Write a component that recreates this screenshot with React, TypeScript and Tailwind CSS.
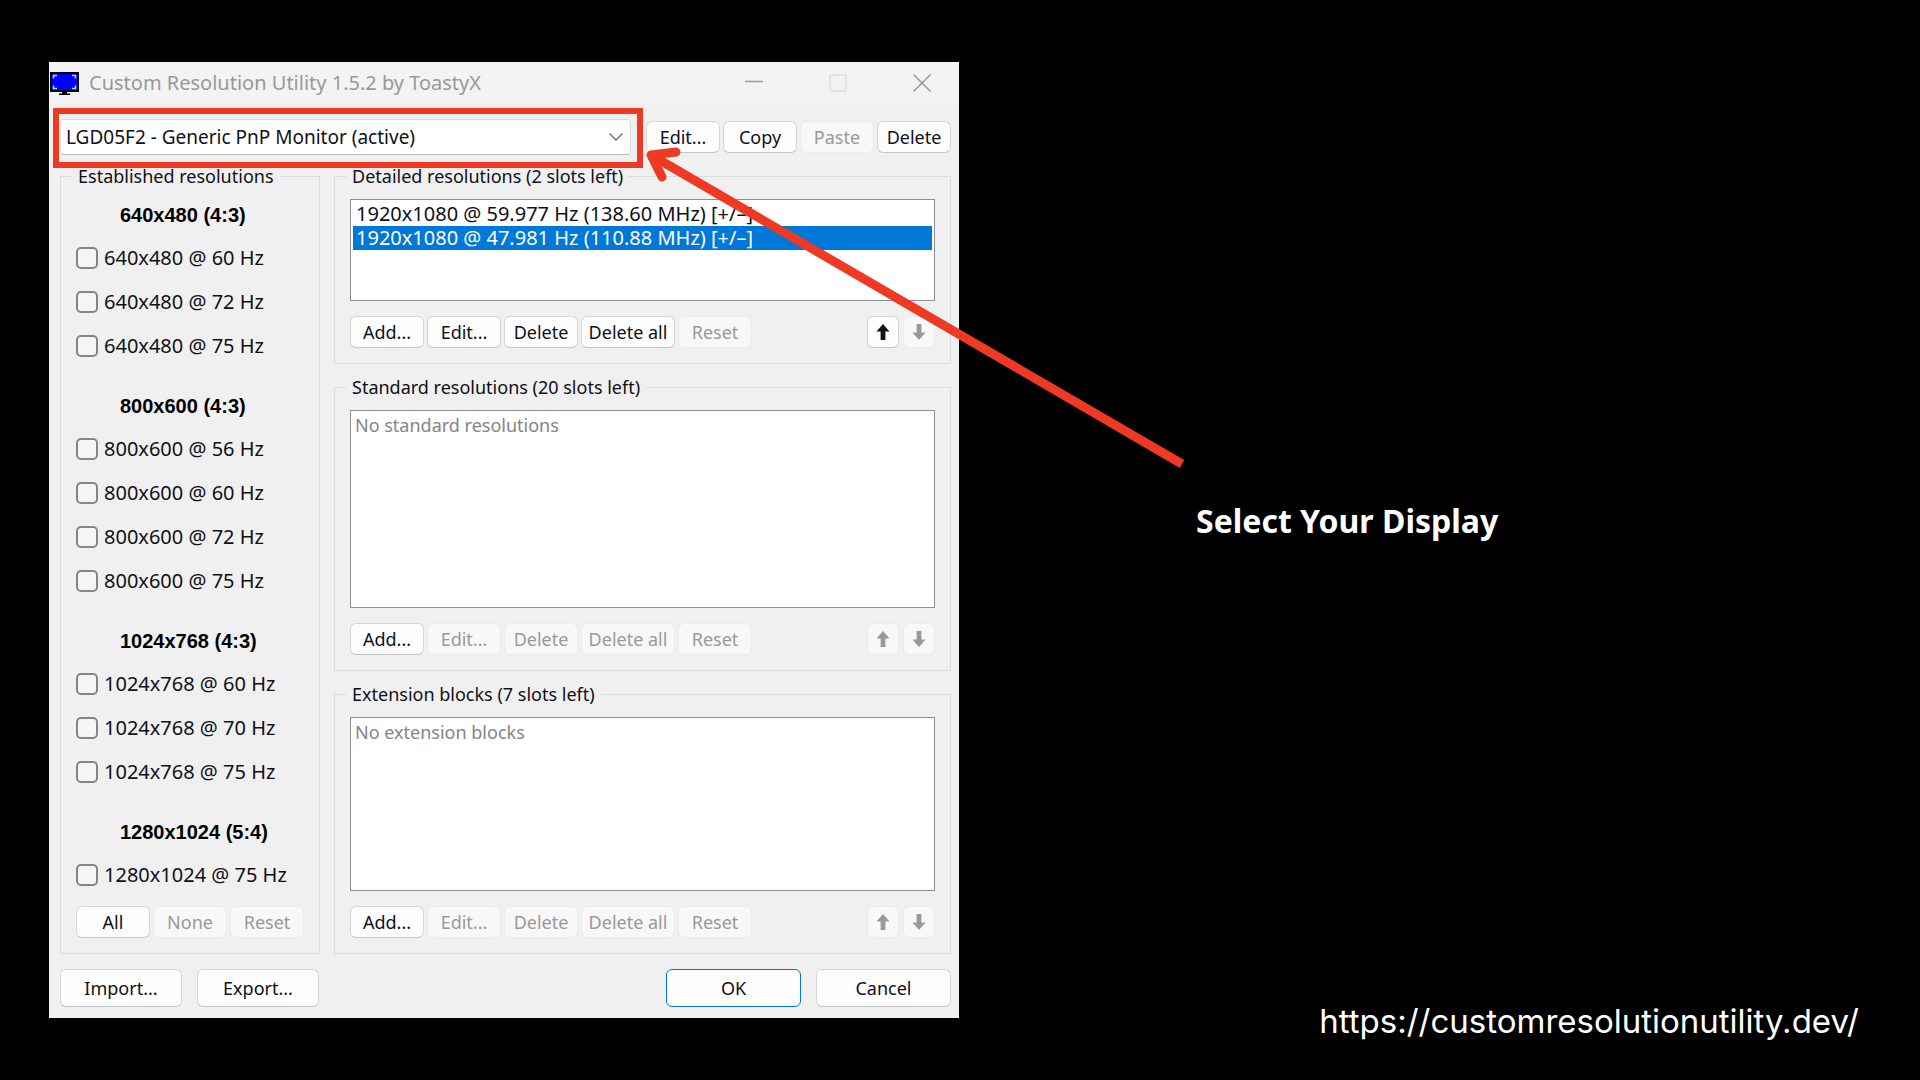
import React, { useState } from "react";

type Slot = { title: string; items: string[]; empty: string; height: string };

const modes = [
  { name: "640x480", ratio: "4:3", rates: [60, 72, 75] },
  { name: "800x600", ratio: "4:3", rates: [56, 60, 72, 75] },
  { name: "1024x768", ratio: "4:3", rates: [60, 70, 75] },
  { name: "1280x1024", ratio: "5:4", rates: [75] },
];

const slots: Slot[] = [
  {
    title: "Detailed resolutions (2 slots left)",
    items: ["1920x1080 @ 59.977 Hz (138.60 MHz) [+/–]", "1920x1080 @ 47.981 Hz (110.88 MHz) [+/–]"],
    empty: "",
    height: "min-h-[102px]",
  },
  { title: "Standard resolutions (20 slots left)", items: [], empty: "No standard resolutions", height: "min-h-[198px]" },
  { title: "Extension blocks (7 slots left)", items: [], empty: "No extension blocks", height: "min-h-[174px]" },
];

function Button({
  children,
  size = "w-[74px] h-8",
  primary = false,
  ...rest
}: React.ButtonHTMLAttributes<HTMLButtonElement> & { size?: string; primary?: boolean }) {
  const edge = primary ? "border-[#0078d4]" : "border-[#d6d6d6] border-b-[#c6c6c6]";
  return (
    <button
      type="button"
      className={`${size} ${edge} flex shrink-0 items-center justify-center whitespace-nowrap rounded-md border bg-[#fdfdfd] text-lg leading-6 text-[#101018] disabled:border-[#ebebeb] disabled:bg-[#f8f8f8] disabled:text-[#999999]`}
      {...rest}
    >
      {children}
    </button>
  );
}

function Arrow({ down = false }: { down?: boolean }) {
  return (
    <svg viewBox="0 0 14 16" className={down ? "h-4 w-3.5 rotate-180" : "h-4 w-3.5"} fill="currentColor" aria-hidden="true">
      <path d="M7 0 13.5 7.5H9.4V16H4.6V7.5H.5Z" />
    </svg>
  );
}

function Group({ title, children }: { title: string; children: React.ReactNode }) {
  return (
    <fieldset className="min-w-0 border border-[#dcdcdc] px-[15px] pb-[15px]">
      <legend className="-ml-1 px-1.5 text-lg leading-6">{title}</legend>
      {children}
    </fieldset>
  );
}

function SlotGroup({ slot }: { slot: Slot }) {
  const [selected, setSelected] = useState(1);
  const filled = slot.items.length > 0;
  return (
    <Group title={slot.title}>
      <ul
        role="listbox"
        aria-label={slot.title}
        className={`${slot.height} mt-[11px] border border-[#8b8e98] bg-white p-0.5 text-xl leading-6`}
      >
        {slot.items.map((item, i) => (
          <li
            key={item}
            role="option"
            aria-selected={i === selected}
            onClick={() => setSelected(i)}
            className={i === selected ? "bg-[#0078d7] px-[3px] text-white" : "px-[3px]"}
          >
            {item}
          </li>
        ))}
        {!filled && <li className="px-0.5 text-lg leading-6 text-[#858585]">{slot.empty}</li>}
      </ul>
      <div className="mt-[15px] flex gap-[3px]">
        <Button>Add...</Button>
        <Button disabled={!filled}>Edit...</Button>
        <Button disabled={!filled}>Delete</Button>
        <Button disabled={!filled} size="w-[94px] h-8">
          Delete all
        </Button>
        <Button disabled>Reset</Button>
        <div className="ml-auto flex gap-1">
          <Button disabled={!filled} size="size-8" aria-label="Move up">
            <Arrow />
          </Button>
          <Button disabled size="size-8" aria-label="Move down">
            <Arrow down />
          </Button>
        </div>
      </div>
    </Group>
  );
}

function TitleBar() {
  return (
    <header className="flex h-[42px] items-center bg-[#f3f3f3] pl-px pr-1 text-[#999999]">
      <svg viewBox="0 0 29 23" className="h-[23px] w-[29px]" aria-hidden="true">
        <path d="M0 0h29v20H0Z" fill="#000" />
        <path d="M2 2h25v16H2Z" fill="#0000ff" />
        <path d="M3.5 6.5V3.5H7M22 3.5h3.500v3M25.500 13.500v3H22M7 16.500H3.500v-3" fill="none" stroke="#a8e8ff" strokeWidth="1.500" />
        <path d="M12 20h5v1.500h3V23H9v-1.500h3Z" fill="#000" />
      </svg>
      <h1 className="ml-2.5 text-xl leading-6">Custom Resolution Utility 1.5.2 by ToastyX</h1>
      <div className="ml-auto flex gap-[18px]">
        <button type="button" aria-label="Minimize" className="flex h-8 w-[66px] items-center justify-center">
          <svg viewBox="0 0 18 18" className="size-[18px]" stroke="currentColor" strokeWidth="1.500" aria-hidden="true">
            <path d="M0 7.500h18" />
          </svg>
        </button>
        <button type="button" disabled aria-label="Maximize" className="flex h-8 w-[66px] items-center justify-center text-[#e0e0e0]">
          <svg viewBox="0 0 18 18" className="size-[18px]" fill="none" stroke="currentColor" strokeWidth="1.500" aria-hidden="true">
            <rect x="1" y="1" width="16" height="16" rx="1" />
          </svg>
        </button>
        <button type="button" aria-label="Close" className="flex h-8 w-[66px] items-center justify-center">
          <svg viewBox="0 0 18 18" className="size-[18px]" stroke="currentColor" strokeWidth="1.500" aria-hidden="true">
            <path d="m.5.5 17 17M17.500.5.5 17.500" />
          </svg>
        </button>
      </div>
    </header>
  );
}

export default function App() {
  return (
    <main className="grid min-h-screen grid-cols-2 bg-black pb-[39px] pl-[49px] pr-[51px] pt-[62px] [font-family:'Noto_Sans',sans-serif]">
      <section className="relative self-start bg-[#f0f0f0] text-[#101018]">
        <TitleBar />

        <div className="flex items-center gap-[3px] pb-[9px] pl-[11px] pr-2 pt-[15px]">
          <div className="relative mr-3 min-w-0 flex-1">
            <select
              aria-label="Display"
              className="block h-9 w-full appearance-none rounded-sm border border-[#dadada] border-b-[#bdbdbd] bg-white pl-[5px] pr-8 text-[19px] leading-6"
            >
              <option>LGD05F2 - Generic PnP Monitor (active)</option>
            </select>
            <svg
              viewBox="0 0 14 8"
              className="pointer-events-none absolute right-2 top-3.5 h-2 w-3.5"
              fill="none"
              stroke="#777"
              strokeWidth="1.500"
              aria-hidden="true"
            >
              <path d="m.5.5 6.500 6.500L13.500.5" />
            </svg>
            <div className="pointer-events-none absolute -bottom-[13px] -left-[7px] -right-3 -top-[11px] z-10 border-6 border-[#ee3a24]" />
          </div>
          <Button>Edit...</Button>
          <Button>Copy</Button>
          <Button disabled>Paste</Button>
          <Button>Delete</Button>
        </div>

        <div className="grid grid-cols-[260px_minmax(0,1fr)] gap-[14px] pl-[11px] pr-2">
          <Group title="Established resolutions">
            <div className="mt-[15px] flex flex-col gap-[26px]">
              {modes.map((mode) => (
                <section key={mode.name}>
                  <h2 className="mb-[9px] ml-11 text-xl leading-6 font-bold text-black [font-family:'Liberation_Sans',sans-serif]">
                    {mode.name} ({mode.ratio})
                  </h2>
                  {mode.rates.map((rate) => (
                    <label key={rate} className="flex h-11 items-center gap-1.5 whitespace-nowrap text-xl leading-6">
                      <input
                        type="checkbox"
                        className="size-[22px] shrink-0 appearance-none rounded-[5px] border-2 border-[#858585] bg-[#f5f5f5] checked:bg-[#0078d4]"
                      />
                      {mode.name} @ {rate} Hz
                    </label>
                  ))}
                </section>
              ))}
            </div>
            <div className="mt-[9px] flex gap-[3px]">
              <Button>All</Button>
              <Button disabled>None</Button>
              <Button disabled>Reset</Button>
            </div>
          </Group>

          <div className="flex flex-col gap-[11px]">
            {slots.map((slot) => (
              <SlotGroup key={slot.title} slot={slot} />
            ))}
          </div>
        </div>

        <footer className="flex gap-[15px] pb-[11px] pl-[11px] pr-2 pt-[15px]">
          <Button size="w-[122px] h-[38px]">Import...</Button>
          <Button size="w-[122px] h-[38px]">Export...</Button>
          <div className="ml-auto flex gap-[15px]">
            <Button size="w-[135px] h-[38px]" primary>
              OK
            </Button>
            <Button size="w-[135px] h-[38px]">Cancel</Button>
          </div>
        </footer>

        {/* Callout arrow running from the caption to the display selector */}
        <svg
          viewBox="0 0 550 330"
          className="pointer-events-none absolute -right-[233px] top-[82px] z-20 h-[330px] w-[550px]"
          fill="none"
          stroke="#ee3a24"
          strokeWidth="9"
          aria-hidden="true"
        >
          <path d="M9 11 540 320" />
          <path d="M34 8 9 11 20 33" strokeLinecap="round" strokeLinejoin="round" />
        </svg>
      </section>

      <aside className="flex flex-col justify-between pr-2.5 text-white">
        <p className="ml-[237px] mt-[437px] text-[32px] leading-[44px] font-bold">Select Your Display</p>
        <a href="https://customresolutionutility.dev/" className="self-end text-[33px] leading-10 [font-family:Inter,sans-serif]">
          https://customresolutionutility.dev/
        </a>
      </aside>
    </main>
  );
}
